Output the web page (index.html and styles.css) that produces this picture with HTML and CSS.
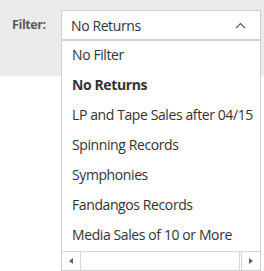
FILE: index.html
```html
<!DOCTYPE html>
<html lang="en">
<head>
  <meta charset="UTF-8">
  <title>Filter</title>
  <link rel="stylesheet" href="styles.css">
</head>
<body>
  <div class="page">
    <div class="toolbar">
      <label class="filter-label" for="filter">Filter:</label>
      <div class="combo">
        <div class="combo-input" id="filter">
          <span>No Returns</span>
          <svg class="chevron" width="11" height="7" viewBox="0 0 11 7">
            <path d="M1 6 L5.5 1.5 L10 6" fill="none" stroke="#555" stroke-width="1.1"/>
          </svg>
        </div>
        <!-- open drop-down list -->
        <div class="combo-list">
          <ul class="items">
            <li>No Filter</li>
            <li class="selected">No Returns</li>
            <li>LP and Tape Sales after 04/15</li>
            <li>Spinning Records</li>
            <li>Symphonies</li>
            <li>Fandangos Records</li>
            <li>Media Sales of 10 or More</li>
          </ul>
          <div class="hscroll">
            <div class="sb-btn"><span class="arrow-left"></span></div>
            <div class="sb-thumb"></div>
            <div class="sb-btn right"><span class="arrow-right"></span></div>
          </div>
        </div>
      </div>
    </div>
  </div>
</body>
</html>
```

FILE: styles.css
```css
body {
  margin: 0;
  font-family: 'Open Sans', 'Noto Sans', sans-serif;
  background-color: #fff;
  color: #333;
}
.page {
  min-height: 271px;
}
.toolbar {
  background-color: #ebebeb;
  height: 76px;
  display: flex;
  align-items: flex-start;
  padding: 10px 3px 0 12px;
  box-sizing: border-box;
}
.filter-label {
  font-weight: bold;
  font-size: 12.5px;
  letter-spacing: -0.4px;
  color: #5a5a5a;
  width: 49px;
  line-height: 30px;
}
.combo {
  position: relative;
  width: 200px;
}
.combo-input {
  height: 30px;
  box-sizing: border-box;
  border: 1px solid #cfcfcf;
  background-color: #fff;
  display: flex;
  align-items: center;
  justify-content: space-between;
  padding: 0 14px 0 9px;
  font-size: 14px;
  letter-spacing: -0.4px;
}
.chevron {
  display: block;
  margin-top: 1px;
}
.combo-list {
  position: absolute;
  left: 0;
  top: 30px;
  width: 200px;
  box-sizing: border-box;
  border: 1px solid #cfcfcf;
  background-color: #fff;
}
.items {
  list-style: none;
  margin: 0;
  padding: 0;
}
.items li {
  height: 30px;
  line-height: 28px;
  padding-left: 10px;
  font-size: 14px;
  letter-spacing: -0.4px;
  white-space: nowrap;
}
.items li.selected {
  font-weight: bold;
}
.hscroll {
  display: flex;
  height: 18px;
  border-top: 1px solid #d6d6d6;
}
.sb-btn {
  width: 18px;
  display: flex;
  align-items: center;
  justify-content: center;
  border-right: 1px solid #d6d6d6;
}
.sb-btn.right {
  border-right: none;
  border-left: 1px solid #d6d6d6;
  margin-left: 1px;
}
.sb-thumb {
  flex: 1;
  border-right: 1px solid #d6d6d6;
}
.arrow-left,
.arrow-right {
  width: 0;
  height: 0;
  border-top: 3.5px solid transparent;
  border-bottom: 3.5px solid transparent;
}
.arrow-left {
  border-right: 4px solid #606060;
}
.arrow-right {
  border-left: 4px solid #606060;
}
```
